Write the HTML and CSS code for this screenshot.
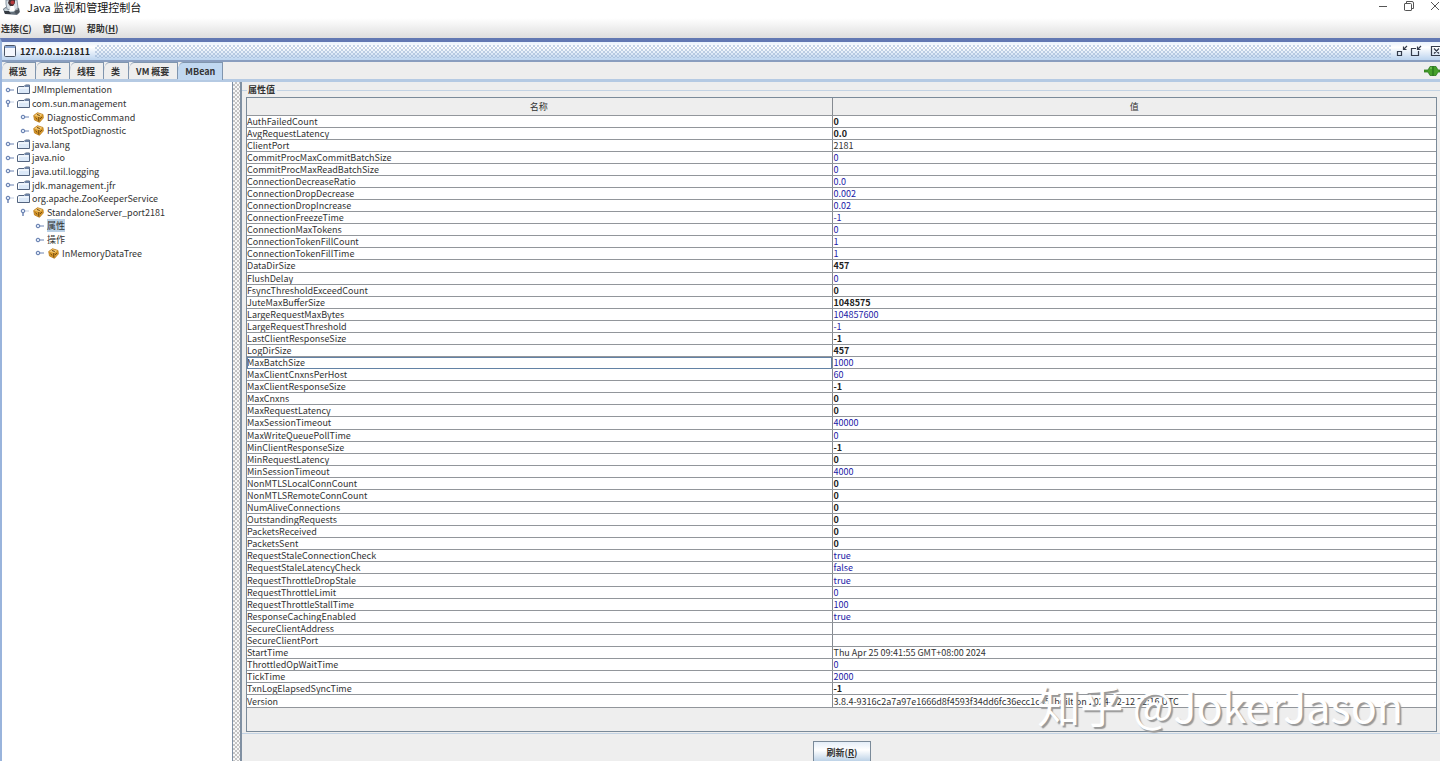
FILE: index.html
```html
<!DOCTYPE html>
<html lang="zh-CN">
<head>
<meta charset="utf-8">
<title>Java 监视和管理控制台</title>
<link rel="stylesheet" href="styles.css">
</head>
<body>
<svg class="defs" aria-hidden="true">
  <symbol id="closed" viewBox="0 0 10 8"><path d="M4.500 4H9" stroke="#6c84b4"/><circle cx="3" cy="4" r="1.800" fill="#dfe9f8" stroke="#5c76aa"/></symbol>
  <symbol id="open" viewBox="0 0 10 8"><path d="M3 4.500V8" stroke="#5c76aa" stroke-width="1.300"/><path d="M5 3H9" stroke="#c3cfe3"/><circle cx="3" cy="3" r="1.800" fill="#dfe9f8" stroke="#5c76aa"/></symbol>
  <symbol id="folder" viewBox="0 0 13 11"><path d="M.5 9.500V3.500L2 2.500H7L8.500 1H12.500V9.500Z" fill="#dce9f8" stroke="#53647f"/><path d="M8.500 1H12.500V3H7.500Z" fill="#6d82a4"/><path d="M1.500 8.500V4H11.500" fill="none" stroke="#fff"/></symbol>
  <symbol id="bean" viewBox="0 0 11 11"><path d="M.7 3.500 4.500.7 10 2.500 10.300 6 6.500 10.300 1.500 8Z" fill="#d99a2b" stroke="#b97818" stroke-width=".8"/><path d="M1.200 3.600 4.700 1.200 9.500 2.800 6 5Z" fill="#f3ca76"/><path d="M5.800 5V9.500M2.500 5.800 4.300 7.500M7 6.800 8.900 5.200M4 2.500 6.800 3.500" stroke="#69420e"/></symbol>
</svg>
<div class="app">
  <header class="titlebar">
    <svg class="duke" viewBox="0 0 19 16"><path d="M1 9 5 6 17 8 18 12 15 15 3 14Z" fill="#65707b"/><path d="M2 9 6 7 16 9 15 12 3 12Z" fill="#c5d0d6"/><path d="M4 0H15L16 8 12 11 5 9 4 4Z" fill="#d6dfe5" stroke="#8b98a5"/><path d="M7 0H13V3L11 6H8L6 3Z" fill="#453034"/><circle cx="10.500" cy="2.500" r="2" fill="#b5383c"/><path d="M9 6 7 11H13L12 6Z" fill="#fff"/><path d="M2 11H7L9 14H3Z" fill="#353b42"/><path d="M12 11 17 9V13L14 14Z" fill="#4c535b"/></svg>
    <h1>Java 监视和管理控制台</h1>
    <div class="window-controls">
      <button aria-label="最小化"><svg viewBox="0 0 12 12"><path d="M2 6.500H10"/></svg></button>
      <button aria-label="还原"><svg viewBox="0 0 12 12"><path d="M1.500 4Q1.500 3.500 2 3.500H7.500Q8.500 3.500 8.500 4.500V10Q8.500 10.500 8 10.500H2.500Q1.500 10.500 1.500 10ZM3.500 3V1.500H9Q10.500 1.500 10.500 3V8.500H9"/></svg></button>
      <button aria-label="关闭"><svg viewBox="0 0 12 12"><path d="M2 2 10 10M10 2 2 10"/></svg></button>
    </div>
  </header>
  <nav class="menubar">
    <button>连接(<u>C</u>)</button><button>窗口(<u>W</u>)</button><button>帮助(<u>H</u>)</button>
  </nav>
  <main class="frame">
    <div class="frame-title">
      <svg class="frame-icon" viewBox="0 0 12 12"><rect x=".5" y=".5" width="11" height="11" rx="1" fill="#f4f7fd" stroke="#4b5565"/><path d="M1 2H11" stroke="#8ba7d2" stroke-width="2"/></svg>
      <h2>127.0.0.1:21811</h2>
      <div class="hatch"></div>
      <div class="frame-controls">
        <button aria-label="图标化"><svg viewBox="0 0 12 12"><path d="M1.500 6.500H5.500V10.500H1.500ZM11 1 8 4M7.500 1.500V4.500H10.500" fill="none" stroke="#343c4b" stroke-width="1.200"/></svg></button>
        <button aria-label="最大化"><svg viewBox="0 0 12 12"><path d="M6 3.500H1.500V10.500H8.500V6M11 1 8 4M7.500 1.500V4.500H10.500" fill="none" stroke="#343c4b" stroke-width="1.200"/></svg></button>
        <button aria-label="关闭窗口"><svg viewBox="0 0 12 12"><path d="M1.500 1.500H11.500V10.500H1.500ZM4 3.500 9 8.500M9 3.500 4 8.500" fill="none" stroke="#343c4b" stroke-width="1.200"/></svg></button>
      </div>
    </div>
    <div class="tabs" role="tablist">
      <button role="tab">概览</button><button role="tab">内存</button><button role="tab">线程</button><button role="tab">类</button><button role="tab">VM 概要</button><button role="tab" class="active" aria-selected="true">MBean</button>
      <svg class="plug" viewBox="0 0 16 12"><path d="M0 5H4L6 1.500H12L14 5H16V7H14L12 10.500H6L4 7H0Z" fill="#46a02a" stroke="#2c7a1d" stroke-width=".8"/><path d="M9 1V11" stroke="#1e6716"/><path d="M6 3H8" stroke="#8ed36f"/></svg>
    </div>
    <div class="content">
      <aside class="tree-pane">
        <ul class="tree">
          <li><svg class="knob"><use href="#closed"/></svg><svg class="folder"><use href="#folder"/></svg><span>JMImplementation</span></li>
          <li><svg class="knob"><use href="#open"/></svg><svg class="folder"><use href="#folder"/></svg><span>com.sun.management</span></li>
          <li class="level-1"><svg class="knob"><use href="#closed"/></svg><svg class="bean"><use href="#bean"/></svg><span>DiagnosticCommand</span></li>
          <li class="level-1"><svg class="knob"><use href="#closed"/></svg><svg class="bean"><use href="#bean"/></svg><span>HotSpotDiagnostic</span></li>
          <li><svg class="knob"><use href="#closed"/></svg><svg class="folder"><use href="#folder"/></svg><span>java.lang</span></li>
          <li><svg class="knob"><use href="#closed"/></svg><svg class="folder"><use href="#folder"/></svg><span>java.nio</span></li>
          <li><svg class="knob"><use href="#closed"/></svg><svg class="folder"><use href="#folder"/></svg><span>java.util.logging</span></li>
          <li><svg class="knob"><use href="#closed"/></svg><svg class="folder"><use href="#folder"/></svg><span>jdk.management.jfr</span></li>
          <li><svg class="knob"><use href="#open"/></svg><svg class="folder"><use href="#folder"/></svg><span>org.apache.ZooKeeperService</span></li>
          <li class="level-1"><svg class="knob"><use href="#open"/></svg><svg class="bean"><use href="#bean"/></svg><span>StandaloneServer_port2181</span></li>
          <li class="level-2"><svg class="knob"><use href="#closed"/></svg><span class="selected">属性</span></li>
          <li class="level-2"><svg class="knob"><use href="#closed"/></svg><span>操作</span></li>
          <li class="level-2"><svg class="knob"><use href="#closed"/></svg><svg class="bean"><use href="#bean"/></svg><span>InMemoryDataTree</span></li>
        </ul>
      </aside>
      <div class="splitter"></div>
      <section class="details">
        <fieldset class="group">
          <legend>属性值</legend>
          <div class="scroll">
            <table>
              <thead><tr><th>名称</th><th>值</th></tr></thead>
              <tbody>
                <tr><td>AuthFailedCount</td><td class="strong">0</td></tr>
                <tr><td>AvgRequestLatency</td><td class="strong">0.0</td></tr>
                <tr><td>ClientPort</td><td>2181</td></tr>
                <tr><td>CommitProcMaxCommitBatchSize</td><td class="edit">0</td></tr>
                <tr><td>CommitProcMaxReadBatchSize</td><td class="edit">0</td></tr>
                <tr><td>ConnectionDecreaseRatio</td><td class="edit">0.0</td></tr>
                <tr><td>ConnectionDropDecrease</td><td class="edit">0.002</td></tr>
                <tr><td>ConnectionDropIncrease</td><td class="edit">0.02</td></tr>
                <tr><td>ConnectionFreezeTime</td><td class="edit">-1</td></tr>
                <tr><td>ConnectionMaxTokens</td><td class="edit">0</td></tr>
                <tr><td>ConnectionTokenFillCount</td><td class="edit">1</td></tr>
                <tr><td>ConnectionTokenFillTime</td><td class="edit">1</td></tr>
                <tr><td>DataDirSize</td><td class="strong">457</td></tr>
                <tr><td>FlushDelay</td><td class="edit">0</td></tr>
                <tr><td>FsyncThresholdExceedCount</td><td class="strong">0</td></tr>
                <tr><td>JuteMaxBufferSize</td><td class="strong">1048575</td></tr>
                <tr><td>LargeRequestMaxBytes</td><td class="edit">104857600</td></tr>
                <tr><td>LargeRequestThreshold</td><td class="edit">-1</td></tr>
                <tr><td>LastClientResponseSize</td><td class="strong">-1</td></tr>
                <tr><td>LogDirSize</td><td class="strong">457</td></tr>
                <tr><td class="focused">MaxBatchSize</td><td class="edit">1000</td></tr>
                <tr><td>MaxClientCnxnsPerHost</td><td class="edit">60</td></tr>
                <tr><td>MaxClientResponseSize</td><td class="strong">-1</td></tr>
                <tr><td>MaxCnxns</td><td class="strong">0</td></tr>
                <tr><td>MaxRequestLatency</td><td class="strong">0</td></tr>
                <tr><td>MaxSessionTimeout</td><td class="edit">40000</td></tr>
                <tr><td>MaxWriteQueuePollTime</td><td class="edit">0</td></tr>
                <tr><td>MinClientResponseSize</td><td class="strong">-1</td></tr>
                <tr><td>MinRequestLatency</td><td class="strong">0</td></tr>
                <tr><td>MinSessionTimeout</td><td class="edit">4000</td></tr>
                <tr><td>NonMTLSLocalConnCount</td><td class="strong">0</td></tr>
                <tr><td>NonMTLSRemoteConnCount</td><td class="strong">0</td></tr>
                <tr><td>NumAliveConnections</td><td class="strong">0</td></tr>
                <tr><td>OutstandingRequests</td><td class="strong">0</td></tr>
                <tr><td>PacketsReceived</td><td class="strong">0</td></tr>
                <tr><td>PacketsSent</td><td class="strong">0</td></tr>
                <tr><td>RequestStaleConnectionCheck</td><td class="edit">true</td></tr>
                <tr><td>RequestStaleLatencyCheck</td><td class="edit">false</td></tr>
                <tr><td>RequestThrottleDropStale</td><td class="edit">true</td></tr>
                <tr><td>RequestThrottleLimit</td><td class="edit">0</td></tr>
                <tr><td>RequestThrottleStallTime</td><td class="edit">100</td></tr>
                <tr><td>ResponseCachingEnabled</td><td class="edit">true</td></tr>
                <tr><td>SecureClientAddress</td><td></td></tr>
                <tr><td>SecureClientPort</td><td></td></tr>
                <tr><td>StartTime</td><td>Thu Apr 25 09:41:55 GMT+08:00 2024</td></tr>
                <tr><td>ThrottledOpWaitTime</td><td class="edit">0</td></tr>
                <tr><td>TickTime</td><td class="edit">2000</td></tr>
                <tr><td>TxnLogElapsedSyncTime</td><td class="strong">-1</td></tr>
                <tr><td>Version</td><td>3.8.4-9316c2a7a97e1666d8f4593f34dd6fc36ecc1c55, built on 2024-02-12 22:16 UTC</td></tr>
              </tbody>
            </table>
          </div>
        </fieldset>
        <div class="actions"><button>刷新(<u>R</u>)</button></div>
      </section>
    </div>
  </main>
  <div class="watermark">知乎 @JokerJason</div>
</div>
</body>
</html>
```
FILE: styles.css
```css
* { box-sizing: border-box; }
body {
  margin: 0;
  background: #eee;
  color: #333;
  font: 9px/11px "Noto Sans CJK SC", sans-serif;
}
h1, h2, ul { margin: 0; padding: 0; font: inherit; }
button { margin: 0; padding: 0; border: 0; background: none; color: inherit; font: inherit; }
.defs { position: absolute; width: 0; height: 0; }
.app { position: relative; display: flex; flex-direction: column; height: 100vh; overflow: hidden; }

.titlebar { display: flex; align-items: center; flex: none; height: 18px; background: #fff; }
.duke { width: 19px; height: 16px; margin: 0 6px 2px 2px; }
.titlebar h1 { flex: 1; margin-bottom: 4px; color: #111; font-size: 11px; line-height: 14px; }
.window-controls { display: flex; gap: 14px; margin: 0 -1px 6px 0; }
.window-controls button { width: 12px; height: 12px; }
.window-controls svg { display: block; width: 12px; height: 12px; fill: none; stroke: #555; }

.menubar { display: flex; align-items: center; gap: 11px; flex: none; height: 20px; padding-left: 1px; background: linear-gradient(#fff, #dedede); font-weight: 700; }

.frame { display: flex; flex: 1; flex-direction: column; min-height: 0; border-top: 4px solid #6278b2; border-left: 2px solid #99b4dc; }
.frame-title { display: flex; align-items: center; flex: none; height: 20px; padding-left: 2px; border-bottom: 2px solid #8a9ebf; background: linear-gradient(#e9f2fc, #fff 30%, #bcd4ef); }
.frame-icon { width: 12px; height: 12px; margin-right: 4px; }
.frame-title h2 { color: #222; font-weight: 700; }
.hatch { flex: 1; height: 13px; margin: 0 5px 0 5px; background: repeating-conic-gradient(#8fa9cb 0 25%, transparent 0 50%) 0 0 / 4px 4px; opacity: .5; }
.frame-controls { display: flex; gap: 2px; margin-right: -2px; }
.frame-controls button:last-child { margin-left: 6px; }
.frame-controls svg { display: block; width: 12px; height: 12px; }

.tabs { display: flex; flex: none; height: 20px; border-bottom: 3px solid #b5cae3; font-weight: 700; }
.tabs button { height: 17px; padding: 0 8px 0 7px; border: 1px solid #8095ae; border-bottom: 0; border-left: 0; border-top-left-radius: 5px 9px; background: #eee; line-height: 15px; }
.tabs button:first-child { padding-left: 7px; }
.tabs .active { height: 18px; padding: 0 7px; background: #c1d8f1; }
.plug { width: 16px; height: 12px; margin: 3px 0 0 auto; }

.content { display: flex; flex: 1; min-height: 0; }
.tree-pane { flex: 0 0 231px; border-right: 1px solid #7d8fa4; background: #fff; }
.tree { display: flex; flex-direction: column; height: 178px; padding: 1px 0 0 3px; list-style: none; }
.tree li { display: flex; align-items: center; flex: 1; }
.tree .level-1 { padding-left: 15px; }
.tree .level-2 { padding-left: 30px; }
.knob { width: 10px; height: 8px; margin-right: 2px; }
.folder { width: 13px; height: 11px; margin-right: 2px; }
.bean { width: 11px; height: 11px; margin-right: 3px; margin-left: 1px; }
.selected { background: #b8cfe5; line-height: 13px; }
.splitter { flex: 0 0 9px; border-right: 2px solid #8090a2; background: repeating-conic-gradient(#c4c4c4 0 25%, transparent 0 50%) 0 0 / 4px 4px, #f8f8f8; }

.details { display: flex; flex: 1; flex-direction: column; min-width: 0; padding-top: 1px; }
.group { display: flex; flex-direction: column; min-width: 0; margin: 0; padding: 0 3px 1px 4px; border: 1px solid #c3d3e4; border-right: 0; border-left: 0; }
legend { margin-left: 1px; padding: 0 2px 0 1px; font-weight: 700; line-height: 14px; }
.scroll { height: 635px; border: 1px solid #7a8a99; }
table { width: 100%; height: 610px; border-collapse: collapse; table-layout: fixed; }
th, td { overflow: hidden; padding: 0 1px; border-bottom: 1px solid #92969b; line-height: 11px; text-align: left; white-space: nowrap; }
th { height: 17px; font-weight: 400; text-align: center; background: #eee; }
th:first-child { width: 585px; }
th:first-child, td:first-child { padding-left: 0; border-right: 1px solid #858a91; }
td { background: #fff; }
.strong { color: #222; font-weight: 700; }
.edit { color: #1a1aa6; }
.focused { outline: 1px solid #6382a5; outline-offset: -1px; }
.actions { padding: 7px 0 0 2px; text-align: center; }
.actions button { width: 58px; height: 22px; border: 1px solid #7a8a99; background: linear-gradient(#e5eef8, #fff 40%, #b8cfe5); font-weight: 700; }

.watermark { position: absolute; right: 37px; bottom: 29px; color: #fff; font-size: 43px; line-height: 56px; text-shadow: 2px 2px 1px #999; }
```
